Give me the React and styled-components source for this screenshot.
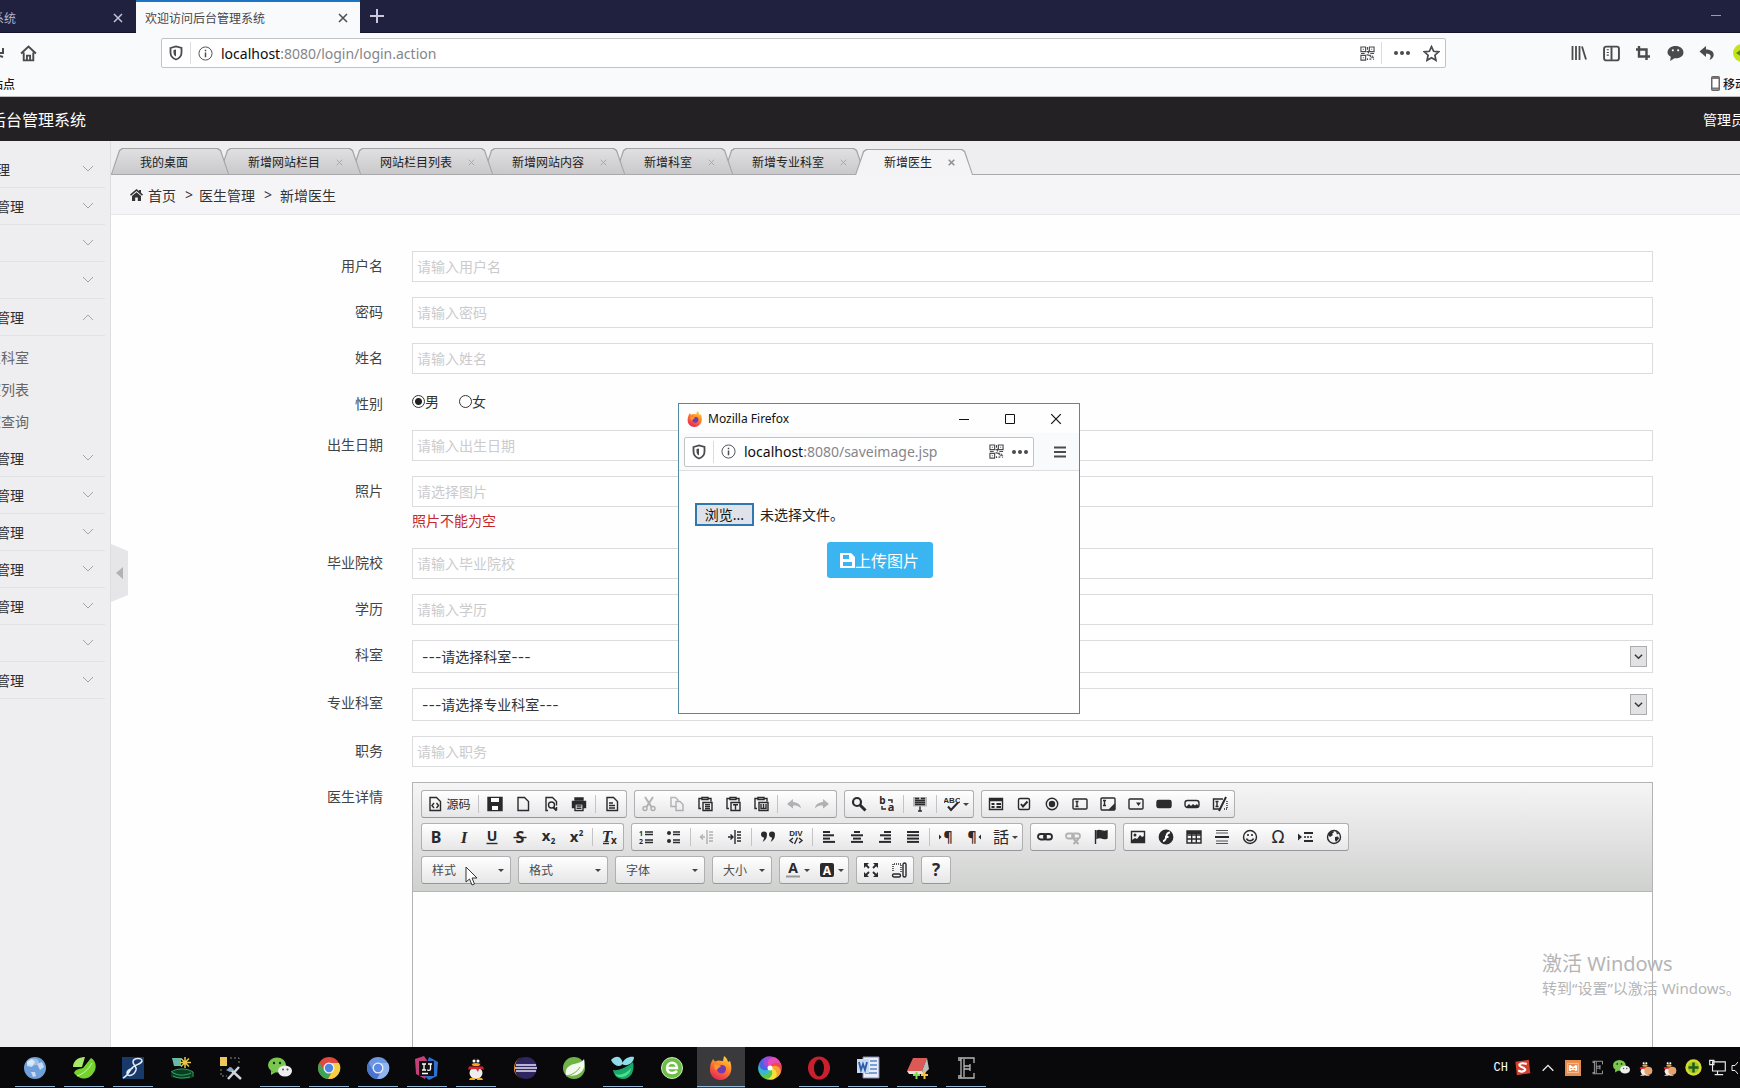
import React, { useRef } from "react";
import styled, { createGlobalStyle, css } from "styled-components";

const Global = createGlobalStyle`
  *, *::before, *::after { box-sizing: border-box; }
  body {
    margin: 0;
    overflow: hidden;
    font-family: "Noto Sans", "Noto Sans CJK SC", sans-serif;
    font-size: 14px;
    color: #333;
    background: #fefefe;
  }
  button, input, select, textarea { font-family: inherit; font-size: inherit; color: inherit; margin: 0; }
  button { border: 0; padding: 0; background: none; cursor: pointer; }
  a { color: inherit; text-decoration: none; }
  svg { display: block; flex: none; }
`;

/* ---------- shell ---------- */
const Screen = styled.div`
  position: relative;
  display: flex;
  flex-direction: column;
  height: 100vh;
  overflow: hidden;
`;
const IconButton = styled.button`
  flex: none;
  width: ${(p) => p.$w || 32}px;
  height: ${(p) => p.$h || 28}px;
  display: flex;
  align-items: center;
  justify-content: center;
  color: ${(p) => p.$color || "#4a4a4f"};
`;
const Spacer = styled.div`
  flex: ${(p) => (p.$w ? `0 0 ${p.$w}px` : 1)};
`;
const ClippedText = styled.span`
  flex: none;
  display: flex;
  justify-content: ${(p) => (p.$start ? "flex-start" : "flex-end")};
  width: ${(p) => p.$w}px;
  overflow: hidden;
  white-space: nowrap;
`;

/* ---------- browser chrome ---------- */
const BrowserTabs = styled.div`
  display: flex;
  flex: none;
  height: 33px;
  background: #20213f;
  border-bottom: 1px solid #14142c;
`;
const BrowserTab = styled.div`
  display: flex;
  align-items: center;
  width: ${(p) => p.$w}px;
  height: 33px;
  font-size: 12px;
  color: ${(p) => (p.$active ? "#45454b" : "#b4b4cc")};
  background: ${(p) => (p.$active ? "#f9fafc" : "transparent")};
  border-top: 2px solid ${(p) => (p.$active ? "#1d74c4" : "transparent")};
  padding-left: ${(p) => (p.$active ? 9 : 0)}px;
`;
const AddressRow = styled.div`
  display: flex;
  align-items: center;
  flex: none;
  height: 40px;
  background: #f9fafc;
`;
const AddressBar = styled.div`
  display: flex;
  align-items: center;
  flex: 1;
  height: 30px;
  min-width: 0;
  background: #fff;
  border: 1px solid #c3c3c6;
  border-radius: 2px;
  color: #55555a;
`;
const PopupAddress = styled(AddressBar)`
  flex: 0 0 350px;
`;
const Url = styled.span`
  flex: 1;
  min-width: 0;
  font-size: 14px;
  color: #85858a;
  white-space: nowrap;
  b { font-weight: 400; color: #0c0c0d; }
`;
const Rule = styled.i`
  flex: none;
  width: 1px;
  height: 22px;
  background: #dcdcde;
`;
const Bookmarks = styled.div`
  display: flex;
  align-items: center;
  flex: none;
  height: 24px;
  padding-bottom: 2px;
  font-size: 12px;
  font-weight: 500;
  color: #1c1c20;
  background: #f9fafc;
  border-bottom: 1px solid #bdbdbf;
`;

/* ---------- admin page ---------- */
const AdminHeader = styled.header`
  display: flex;
  flex: none;
  align-items: center;
  justify-content: space-between;
  height: 44px;
  background: #232123;
  color: #fff;
`;
const SiteTitle = styled.h1`
  display: flex;
  margin: 0;
  font-size: 16px;
  font-weight: 400;
`;
const Body = styled.div`
  display: flex;
  flex: 1;
  min-height: 0;
`;
const Sidebar = styled.nav`
  flex: none;
  position: relative;
  width: 111px;
  padding-top: 10px;
  background: #eeeef0;
  border-right: 1px solid #dededf;
`;
const MenuRow = styled.button`
  display: flex;
  align-items: center;
  justify-content: space-between;
  width: 105px;
  height: 37px;
  padding-right: 11px;
  color: #2e2e30;
  border-bottom: 1px solid #e2e2e4;
`;
const SubMenu = styled.div`
  padding: 6px 0 2px;
  display: flex;
  flex-direction: column;
`;
const SubLink = styled.a`
  display: flex;
  height: 32px;
  line-height: 32px;
  color: #666;
`;
const Collapse = styled.button`
  position: absolute;
  left: 111px;
  top: 403px;
  width: 17px;
  height: 58px;
  display: flex;
  align-items: center;
  justify-content: center;
  background: #e6e6e8;
  clip-path: polygon(0 0, 100% 7px, 100% 51px, 0 100%);
`;
const Main = styled.main`
  flex: 1;
  min-width: 0;
  display: flex;
  flex-direction: column;
  background: #fefefe;
`;
const PageTabs = styled.div`
  display: flex;
  flex: none;
  align-items: flex-end;
  height: 34px;
  background: #eeeef0;
  border-bottom: 1px solid #a9a9ab;
  isolation: isolate;
`;
const slant = "polygon(0 100%, 8px 2px, 11px 0, calc(100% - 11px) 0, calc(100% - 8px) 2px, 100% 100%)";
const PageTab = styled.div`
  position: relative;
  z-index: ${(p) => (p.$active ? 20 : p.$z)};
  display: flex;
  align-items: center;
  flex: none;
  height: 26px;
  padding: ${(p) => (p.$active ? 0 : 2)}px 15px 0 29px;
  margin-right: -10px;
  margin-bottom: ${(p) => (p.$active ? -1 : 0)}px;
  font-size: 12px;
  color: #222;
  &::before, &::after {
    content: "";
    position: absolute;
    z-index: -1;
    inset: 0;
    background: #a3a3a5;
    clip-path: ${slant};
  }
  &::after {
    inset: 1px 1px 0 1px;
    background: ${(p) => (p.$active ? "#f4f4f6" : "linear-gradient(#e0e0e2, #c9c9cb)")};
  }
`;
const TabClose = styled.button`
  width: 14px;
  height: 14px;
  margin-left: 12px;
  display: flex;
  align-items: center;
  justify-content: center;
  color: ${(p) => (p.$active ? "#8f8f91" : "#a8a8aa")};
  visibility: ${(p) => (p.$hidden ? "hidden" : "visible")};
`;
const Breadcrumb = styled.nav`
  display: flex;
  flex: none;
  align-items: center;
  height: 40px;
  padding-left: 19px;
  background: #f5f5f7;
  border-bottom: 1px solid #e8e8ea;
  a { margin-left: 5px; }
  span { width: 12px; margin-left: 9px; }
  span + a { margin-left: 2px; }
  span + a:last-child { margin-left: 4px; }
`;

/* ---------- form ---------- */
const Form = styled.form`
  display: flex;
  flex-direction: column;
  flex: 1;
  min-height: 0;
  gap: 15px;
  padding: 36px 87px 0 0;
`;
const FormRow = styled.div`
  display: flex;
  gap: 29px;
  ${(p) => p.$grow && css`flex: 1; min-height: 0;`}
  ${(p) => p.$h && css`height: ${p.$h}px;`}
`;
const RowLabel = styled.label`
  flex: none;
  width: 272px;
  height: 29px;
  line-height: 29px;
  text-align: right;
  color: #444;
`;
const Field = styled.div`
  position: relative;
  flex: 1;
  min-width: 0;
`;
const box = css`
  display: block;
  width: 100%;
  border: 1px solid #dcdcde;
  border-radius: 0;
  background: #fff;
  outline: none;
`;
const TextInput = styled.input`
  ${box}
  height: 31px;
  padding: 0 4px;
  &::placeholder { color: #cbcbcd; opacity: 1; }
`;
const Select = styled.select`
  ${box}
  height: 33px;
  padding: 0 9px;
  appearance: none;
  font-family: Inter, "Noto Sans CJK SC", sans-serif;
`;
const SelectArrow = styled.span`
  position: absolute;
  right: 6px;
  top: 6px;
  width: 17px;
  height: 21px;
  display: flex;
  align-items: center;
  justify-content: center;
  background: #e2e2e5;
  border: 1px solid #adadb0;
  pointer-events: none;
`;
const ErrorText = styled.p`
  margin: 0;
  height: 26px;
  line-height: 28px;
  color: #c4282b;
`;
const RadioGroup = styled.div`
  display: flex;
  align-items: center;
  gap: 20px;
  height: 24px;
`;
const RadioLabel = styled.label`
  display: flex;
  align-items: center;
`;
const Radio = styled.input`
  appearance: none;
  width: 13px;
  height: 13px;
  border: 1px solid #333;
  border-radius: 50%;
  background: #fff;
  &:checked { background: radial-gradient(circle, #222 3px, #fff 4px); }
`;

/* ---------- rich text editor ---------- */
const Editor = styled.div`
  flex: 1;
  min-width: 0;
  display: flex;
  flex-direction: column;
  border: 1px solid #b3b3b5;
  border-bottom: 0;
`;
const Toolbar = styled.div`
  display: flex;
  flex-direction: column;
  gap: 5px;
  padding: 7px 8px;
  background: linear-gradient(#f5f5f5, #cfd1cf);
  border-bottom: 1px solid #b6b6b6;
`;
const ToolRow = styled.div`
  display: flex;
  gap: 7px;
`;
const ToolGroup = styled.div`
  display: flex;
  align-items: center;
  height: 28px;
  border: 1px solid #b0b0b2;
  border-bottom-color: #979799;
  border-radius: 3px;
  background: linear-gradient(#fff, #e6e6e8);
`;
const Tool = styled.button`
  display: flex;
  align-items: center;
  justify-content: center;
  gap: 3px;
  width: ${(p) => p.$w || 28}px;
  height: 26px;
  font-size: 12px;
  color: #2a2a2c;
  opacity: ${(p) => (p.$off ? 0.32 : 1)};
`;
const ToolSep = styled.i`
  width: 1px;
  height: 18px;
  margin: 0 2px;
  background: #c4c4c6;
`;
const Combo = styled.button`
  display: flex;
  align-items: center;
  justify-content: space-between;
  width: ${(p) => p.$w}px;
  height: 28px;
  padding: 0 6px 0 10px;
  font-size: 12px;
  color: #4c4c4e;
  border: 1px solid #b0b0b2;
  border-bottom-color: #979799;
  border-radius: 3px;
  background: linear-gradient(#fff, #e6e6e8);
`;
const EditArea = styled.textarea`
  flex: 1;
  border: 0;
  padding: 12px;
  resize: none;
  outline: none;
  background: #fefefe;
`;

/* ---------- popup window ---------- */
const Popup = styled.section`
  position: absolute;
  z-index: 30;
  left: 678px;
  top: 403px;
  width: 402px;
  height: 311px;
  display: flex;
  flex-direction: column;
  background: #fefefe;
  border: 1px solid #4f8ba3;
`;
const PopupTitle = styled.div`
  display: flex;
  align-items: center;
  height: 29px;
  padding-left: 8px;
  font-size: 12px;
  color: #111;
  gap: 5px;
`;
const PopupControls = styled.div`
  display: flex;
  flex: none;
`;
const PopupBar = styled.div`
  display: flex;
  align-items: center;
  height: 38px;
  padding: 0 0 0 5px;
  background: #f9fafc;
  border-bottom: 1px solid #dfdfe1;
`;
const PopupBody = styled.div`
  display: flex;
  flex-direction: column;
  padding: 32px 15px 0 16px;
  gap: 16px;
`;
const FileLine = styled.div`
  display: flex;
  align-items: center;
  gap: 6px;
  height: 23px;
  line-height: 20px;
  color: #222;
`;
const Browse = styled.button`
  width: 59px;
  height: 23px;
  line-height: 18px;
  background: #dfe2e8;
  border: 2px solid #2f78b0;
  color: #111;
`;
const Upload = styled.button`
  display: flex;
  align-items: center;
  justify-content: center;
  align-self: center;
  width: 106px;
  height: 36px;
  font-size: 16px;
  color: #fff;
  background: #3bb4f2;
  border-radius: 3px;
`;

/* ---------- desktop overlays and taskbar ---------- */
const Watermark = styled.div`
  position: absolute;
  right: 2px;
  bottom: 89px;
  width: 196px;
  font-size: 15px;
  line-height: 22px;
  color: #b5b5b7;
  white-space: nowrap;
  pointer-events: none;
  strong { display: block; font-weight: 400; font-size: 20px; line-height: 26px; }
`;
const Cursor = styled.svg`
  position: absolute;
  left: 465px;
  top: 866px;
`;
const Taskbar = styled.footer`
  display: flex;
  flex: none;
  height: 41px;
  padding-left: 11px;
  background: #09090b;
  color: #fff;
`;
const TaskItem = styled.button`
  display: flex;
  align-items: center;
  justify-content: center;
  flex: none;
  width: 48px;
  margin-right: 1px;
  border-top: 1px solid transparent;
  background-color: ${(p) => (p.$active ? "#3a393b" : "transparent")};
  background-image: ${(p) => (p.$open ? "linear-gradient(#93b6d2, #93b6d2)" : "none")};
  background-size: ${(p) => (p.$active ? 48 : 40)}px 1px;
  background-position: center bottom 1px;
  background-repeat: no-repeat;
`;
const Tray = styled.div`
  display: flex;
  align-items: center;
  margin-left: auto;
  font: 12px "Liberation Mono", monospace;
`;
const TrayItem = styled.button`
  display: flex;
  align-items: center;
  justify-content: center;
  width: ${(p) => p.$w || 24}px;
  height: 40px;
`;

/* ---------- small icons ---------- */
const Line = ({ s = 16, w = 1.5, vb = 16, children, ...r }) => (
  <svg width={s} height={s} viewBox={`0 0 ${vb} ${vb}`} fill="none" stroke="currentColor" strokeWidth={w} {...r}>{children}</svg>
);
const Cross = ({ s = 10, w = 1.5 }) => <Line s={s} w={w} vb={10}><path d="M1 1l8 8M9 1l-8 8" /></Line>;
const Chevron = ({ up }) => <Line s={12} w={1} vb={12} stroke="#a4a4a6"><path d={up ? "M1 9l5-5 5 5" : "M1 3l5 5 5-5"} /></Line>;
const Caret = () => <svg width="6" height="3" viewBox="0 0 6 3"><path d="M0 0h6L3 3z" fill="#444" /></svg>;
const Shield = () => <Line w={1.8}><path d="M2.500 3L8 1.500 13.500 3v4.500c0 4-2.500 6-5.500 7-3-1-5.500-3-5.500-7z" /><path d="M8 4.500v7C6 10.500 5.500 9 5.500 7.500V5z" fill="currentColor" stroke="none" /></Line>;
const Info = () => <Line w={1} s={15}><circle cx="8" cy="8" r="7" /><path d="M8 7v5M8 4v1.600" strokeWidth="1.600" /></Line>;
const Dots = () => <svg width="18" height="6" viewBox="0 0 18 6" fill="currentColor"><circle cx="3" cy="3" r="2" /><circle cx="9" cy="3" r="2" /><circle cx="15" cy="3" r="2" /></svg>;
const Qr = () => <Line s={15} w={1.2}><path d="M1 1h5v5H1zM10 1h5v5h-5zM1 10h5v5H1zM3 3.500h1M12 3.500h1M3 12.500h1M8 1v3M7 6h2v2M1 8h4M11 8h4M9 10h2v2M13 10v2h2M8 13v2M10 14h2M14 14h1M7 9.500h2M12 12.500h1M9 5h1" /></Line>;
const Star = () => <Line s={17} w={1.6}><path d="M8 1.500l2 4.400 4.700.5-3.500 3.200 1 4.800L8 12l-4.200 2.400 1-4.800L1.300 6.400 6 5.900z" /></Line>;
const House = () => <Line s={17} w={1.8}><path d="M1 8l7-6.500L15 8M3.500 7v7.500h9V7" /><path d="M6.500 14.500V10h3v4.500" /></Line>;
const Fox = ({ s = 24 }) => (
  <svg width={s} height={s} viewBox="0 0 24 24">
    <defs><linearGradient id={`fx${s}`} x1=".8" y1="0" x2=".3" y2="1"><stop offset="0" stopColor="#ffd93b" /><stop offset=".5" stopColor="#ff7a28" /><stop offset="1" stopColor="#e6245c" /></linearGradient></defs>
    <path d="M2 7l2-4 2 2.500 3-1L14 5l1-5c3 2 3.500 4 4 6l2-1c3 8 1 15-5 18-7 3-14-1-15-8 0-3 0-5 1-8z" fill={`url(#fx${s})`} />
    <path d="M8 10l5-1c4 0 5 4 3 7-3 3-8 1-8-3z" fill="#6f3bb5" /><path d="M5 9c3-1 4 0 7 1-1 2-3 1-3 3l-3 1z" fill="#ff9a2e" />
  </svg>
);

const T = ({ children, x = 8, y = 13, size = 14, f = "Noto Sans", ...r }) => (
  <text x={x} y={y} fontSize={size} fontFamily={f} fontWeight="700" textAnchor="middle" fill="currentColor" stroke="none" {...r}>{children}</text>
);
const page = "M3 1.500h6.500l4 4v9H3z";
const bars = (rows) => <g strokeWidth="2">{rows.map(([a, b], i) => <path key={i} d={`M${a} ${3 + i * 3.3}H${b}`} />)}</g>;
const clip = <path d="M5 2.500H2v10h2M11 2.500h3v3M5 1.500h6v2H5zM6 6.500h9v8H6z" />;
const I = {
  source: <><path d={page} /><path d="M7 7l-2 2.500L7 12M9.500 7l2 2.500-2 2.500" /></>,
  save: <><path d="M1 1.500h14v13H1z" fill="currentColor" /><path d="M4 2h8v4H4zM5 10h6v4H5z" fill="#fff" stroke="none" /></>,
  blank: <path d={page} />,
  preview: <><path d="M5 14.500H3v-13h6.500l4 4v4M13.500 11v3.500" /><circle cx="8.500" cy="9" r="3" /><path d="M10.500 11.500l3 3" strokeWidth="2" /></>,
  print: <><path d="M4 2h8v2H4z" fill="currentColor" /><path d="M1.500 5.500h13v6h-13z" fill="currentColor" /><path d="M4 8h8v6.500H4z" fill="#fff" /><path d="M5.500 10h5M5.500 12.300h5" /></>,
  template: <><path d={page} /><path d="M5 7h4M5 9.500h6M5 12h6" /></>,
  cut: <><path d="M4 1l6.500 10M12 1L5.500 11" strokeWidth="2" /><circle cx="4" cy="12.500" r="2" /><circle cx="12" cy="12.500" r="2" /></>,
  copy: <><path d="M9 10.500H2v-9h4.500L9 4v2" /><path d="M7 5.500h4l3 3v6H7z" fill="#f4f4f4" /></>,
  paste: <>{clip}<path d="M8 8.700h5M8 10.700h5M8 12.700h5" /></>,
  pasteT: <>{clip}<path d="M8 8.700h5M10.500 8.700v5" /></>,
  pasteW: <>{clip}<path d="M8 8v4.500h5V8M10.500 8v4" /></>,
  undo: <path d="M7 3L1 8l6 4.500V9.500c4 0 6 .5 8 3-.5-4-3-6-8-6.500z" fill="currentColor" stroke="none" />,
  redo: <path d="M9 3l6 5-6 4.500V9.500c-4 0-6 .5-8 3 .5-4 3-6 8-6.500z" fill="currentColor" stroke="none" />,
  find: <><circle cx="6" cy="6" r="4" strokeWidth="2.200" /><path d="M9 9l5.500 5.500" strokeWidth="3" /></>,
  replace: <><T x={3.5} y={8} size={10}>b</T><T x={12} y={15} size={11}>a</T><path d="M9 4h4v3M3 10v3h4" /></>,
  all: <><path d="M1 1h14v9.500H1z" fill="#b8b8ba" stroke="none" /><path d="M3 2.500h4M9 2.500h4M3 4.500h10M3 6.500h10M3 8.500h10M8 10.500V15M6 15h4" /></>,
  spell: <><T size={8} y={7} f="Liberation Sans">ABC</T><path d="M4 10.500l3 3.500 7-7.500" strokeWidth="2" /></>,
  form: <><path d="M1.500 2.500h13v11h-13z" /><path d="M1.500 4h13" strokeWidth="2.500" /><path d="M3.500 8h3M8.500 8H13M3.500 11h3M8.500 11H13" strokeWidth="1.800" /></>,
  check: <><rect x="2.500" y="2.500" width="11" height="11" rx="1.500" /><path d="M5 8l2 2.500 4.500-5" strokeWidth="2" /></>,
  radio: <><circle cx="8" cy="8" r="5.700" /><circle cx="8" cy="8" r="3.200" fill="currentColor" stroke="none" /></>,
  field: <><rect x="1" y="3" width="14" height="10" rx="1" /><path d="M3.500 5.500h3M5 5.500v5M3.500 10.500h3" /></>,
  area: <><rect x="1" y="2" width="14" height="12" rx="1" /><path d="M3 4.500h3M4.500 4.500v5M3 9.500h3M9 14l6-6M11 14l4-4M13 14l2-2" /></>,
  list: <><rect x="1" y="3" width="14" height="10" rx="1" /><path d="M8 6.500h5L10.500 10z" fill="currentColor" stroke="none" /></>,
  button: <rect x="1" y="4.500" width="14" height="7" rx="1.500" fill="currentColor" />,
  imgbtn: <><rect x="1" y="4.500" width="14" height="7" rx="2.500" /><path d="M2 11l3-3 2 2 2-2 2 1.500L13 8l2 3z" fill="currentColor" stroke="none" /></>,
  hidden: <><path d="M8 13H1.500V3H11M3.500 5.500h3M5 5.500v5M3.500 10.500h3" /><path d="M14 1L7 15" strokeWidth="2" /><path d="M12 13h3V4" strokeDasharray="1 1" /></>,
  bold: <T size={16} y={14}>B</T>,
  italic: <T size={17} y={14} f="Liberation Serif" fontStyle="italic">I</T>,
  under: <><T size={14} y={12}>U</T><path d="M2.500 14.500h11" /></>,
  strike: <><T size={16} y={14}>S</T><path d="M1.500 8.500h13" /></>,
  sub: <><T size={15} x={6} y={12}>x</T><T size={8} x={13} y={15}>2</T></>,
  sup: <><T size={15} x={6} y={13}>x</T><T size={8} x={13} y={7}>2</T></>,
  clear: <><T size={17} x={6} f="Liberation Serif" fontStyle="italic">T</T><path d="M2 14.500h6" /><T size={10} x={13} y={15}>x</T></>,
  ol: <><path d="M7 3h8M7 5.500h8M7 11h8M7 13.500h8" /><T size={7} x={3} y={7}>1</T><T size={7} x={3} y={15}>2</T></>,
  ul: <><path d="M7 3h7M7 5.500h7M7 11h7M7 13.500h7" /><circle cx="3" cy="4" r="2" fill="currentColor" stroke="none" /><circle cx="3" cy="12" r="2" fill="currentColor" stroke="none" /></>,
  outdent: <path d="M8 1v14M10 3h4M10 6h4M10 9h4M10 12h4M1 8h5M4 5.500L1.500 8 4 10.500" />,
  indent: <path d="M8 1v14M10 3h4M10 6h4M10 9h4M10 12h4M1 8h5M3.500 5.500L6 8l-2.500 2.500" />,
  quote: <g fill="currentColor" stroke="none"><path d="M1 5.500a3 3 0 116 0c0 4-2 6-4.500 7.500 1-2 1.500-3 1.500-4.500-2 0-3-1.500-3-3z" /><path d="M9 5.500a3 3 0 116 0c0 4-2 6-4.500 7.500 1-2 1.500-3 1.500-4.500-2 0-3-1.500-3-3z" /></g>,
  div: <><T size={8} y={7} f="Liberation Sans">DIV</T><path d="M5 9l-3 2.500L5 14M11 9l3 2.500-3 2.500M9.500 8.500l-3 6.500" /></>,
  left: bars([[2, 9], [2, 13], [2, 9], [2, 14]]),
  center: bars([[5, 11], [2, 14], [4, 12], [2, 14]]),
  right: bars([[7, 14], [3, 14], [7, 14], [2, 14]]),
  full: bars([[2, 14], [2, 14], [2, 14], [2, 14]]),
  ltr: <><path d="M1 5.500v5L3.500 8z" fill="currentColor" stroke="none" /><T x={10} size={14}>¶</T></>,
  rtl: <><path d="M15 5.500v5L12.500 8z" fill="currentColor" stroke="none" /><T x={6} size={14}>¶</T></>,
  lang: <T size={16} y={14} f="Noto Sans CJK JP" fontWeight="400">話</T>,
  link: <><rect x="1" y="5" width="8" height="5.500" rx="2.700" strokeWidth="1.800" /><rect x="7" y="5" width="8" height="5.500" rx="2.700" strokeWidth="1.800" /></>,
  unlink: <><rect x="1" y="4.500" width="8" height="5" rx="2.500" strokeWidth="1.800" /><rect x="7" y="4.500" width="8" height="5" rx="2.500" strokeWidth="1.800" /><path d="M8.500 10l5 5M13.500 10l-5 5" strokeWidth="1.800" /></>,
  anchor: <><path d="M2.500 1v14" /><path d="M4 2c4-2 5 2 10 0v7c-5 2-6-2-10 0z" fill="currentColor" /></>,
  image: <><path d="M1.500 2.500h13v11h-13z" /><circle cx="5" cy="6" r="1.500" fill="currentColor" stroke="none" /><path d="M2 13V11l3-2 2 1 3-4 2 2 2-1v6z" fill="currentColor" stroke="none" /></>,
  flash: <><circle cx="8" cy="8" r="6.700" fill="currentColor" /><path d="M12 3.500c-4 0-3.500 4-4 5.500s-1 3-3 3M7 8h3.500" stroke="#fff" strokeWidth="1.800" /></>,
  table: <><path d="M1 2h14v12H1zM1 6h14M1 10h14M5.700 5v9M10.300 5v9" /><path d="M1 3.500h14" strokeWidth="3" /></>,
  hr: <><path d="M2 1.500h12M2 4h12M2 12h12M2 14.500h12" strokeWidth=".8" /><path d="M1 8h14" strokeWidth="2" /></>,
  smile: <><circle cx="8" cy="8" r="6.500" /><path d="M4.500 9.500c1 3 6 3 7 0" /><path d="M6 5v2M10 5v2" strokeWidth="1.600" /></>,
  omega: <T size={17} f="DejaVu Sans" y={14} fontWeight="400">Ω</T>,
  brk: <><path d="M0 4.500v7L4 8z" fill="currentColor" stroke="none" /><path d="M6 4h9M6 12h9" strokeWidth="2" /><path d="M6 8h9" strokeDasharray="2 1" /></>,
  globe: <><circle cx="8" cy="8" r="6.500" /><path d="M3 4l4-2 1 1-2 2 1 1-3 2-2-2zM9 8l3-.500 1 2-3 3.500-1-2zM10 2.500l3 2-2 1z" fill="currentColor" stroke="none" /></>,
  color: <><T size={14} y={11}>A</T><path d="M1 14.500h14" strokeWidth="2" stroke="#999" /></>,
  bg: <><rect x="1" y="1" width="14" height="14" rx="2" fill="currentColor" stroke="none" /><T size={12} y={12.5} style={{ fill: "#fff" }}>A</T></>,
  max: <><path d="M2 2l4 4M14 2l-4 4M2 14l4-4M14 14l-4-4" strokeWidth="1.800" /><path d="M1 6V1h5zM10 1h5v5zM1 10v5h5zM15 10v5h-5z" fill="currentColor" stroke="none" /></>,
  blocks: <><path d="M2 9V2h8v8" strokeDasharray="1 1" /><rect x="12" y="1" width="3" height="14" rx="1.500" /><rect x="1.500" y="12" width="8" height="3" rx="1.500" /></>,
  help: <T size={17} y={14}>?</T>,
};
const names = {
  save: "保存", blank: "新建", preview: "预览", print: "打印", template: "模板", cut: "剪切", copy: "复制", paste: "粘贴",
};
const widths = { source: 54, spell: 34, lang: 34, color: 34, bg: 34 };
const Group = ({ items }) => (
  <ToolGroup>
    {items.map((it, i) => {
      if (it === "|") return <ToolSep key={i} />;
      const off = it[0] === "-";
      const more = it[0] === "+";
      const id = off || more ? it.slice(1) : it;
      return (
        <Tool key={i} type="button" $w={widths[id]} $off={off} aria-label={names[id] || id}>
          <Line w={1.4}>{I[id]}</Line>
          {id === "source" && "源码"}
          {more && <Caret />}
        </Tool>
      );
    })}
  </ToolGroup>
);

/* ---------- taskbar artwork ---------- */
const Wechat = <><ellipse cx="9" cy="9" rx="9" ry="7.500" fill="#7ac74f" /><path d="M3 15l0 4 5-3z" fill="#7ac74f" /><circle cx="6" cy="7" r="1.200" fill="#17300c" /><circle cx="12" cy="7" r="1.200" fill="#17300c" /><ellipse cx="17" cy="15" rx="7" ry="5.500" fill="#eee" /><circle cx="15" cy="13.500" r="1" fill="#555" /><circle cx="19.500" cy="13.500" r="1" fill="#555" /></>;
const Penguin = <><ellipse cx="12" cy="17" rx="6.500" ry="6" fill="#eee" /><path d="M7 8a5 6 0 0110 0v2H7z" fill="#18181c" /><circle cx="10" cy="5" r="1.500" fill="#fff" /><circle cx="14" cy="5" r="1.500" fill="#fff" /><ellipse cx="12" cy="8.500" rx="4" ry="1.600" fill="#f6a623" /><path d="M5 10.500h14l1 3-5-.5-1 3-2-3-8 .5z" fill="#d8262c" /><path d="M6 22h5v2H5zM13 22h5l1 2h-6z" fill="#f6a623" /></>;
const Epic = <path d="M4 2h16v5M4 22h16v-5M7 2v20M10 3v18M10 10h6M10 13h6M16 8v7M4 4h3M4 20h3" fill="none" stroke="#b8b8ba" strokeWidth="1.300" />;
const chrome = (a, b, c, d) => (
  <>
    <circle cx="12" cy="12" r="11" fill={a} />
    <path d="M2.500 6.500A11 11 0 0011 23l4.500-8L12 12 6 13z" fill={b} />
    <path d="M12 7h10a11 11 0 01-11 16l5-9z" fill={c} />
    <circle cx="12" cy="12" r="5.500" fill="#eef" /><circle cx="12" cy="12" r="4.200" fill={d} />
  </>
);
const tasks = [
  ["浏览器", 1, <><circle cx="12" cy="12" r="11" fill="#6f9fd8" /><path d="M4 6l5-3 3 3-3 5-5-1zM14 8l5-2 2 5-4 3zM8 16l4 0 1 4-3 1z" fill="#c6dcf4" /><ellipse cx="10" cy="6" rx="6" ry="3.500" fill="#fff" opacity=".35" /></>],
  ["绿叶", 1, <><path d="M11 12L19 2c5 3 6 9 3 14-5 9-15 8-20 1 1-3 4-4 9-5z" fill="#74d32e" /><path d="M1 11C1 5 6 1 13 1l-3 10z" fill="#a6e86a" /><path d="M5 20c6-2 11-6 15-13" stroke="#d3f7a8" fill="none" /></>],
  ["SQL", 1, <><path d="M1 1h22v22H1z" fill="#173a6b" /><path d="M2 22C5 21 7 18 10 13c3-5 10-4 11-8 0-4-9-3-9 1 0 3 4 4 3 8-2 6-9 7-9 3 0-3 3-4 6-5" stroke="#e8eef8" strokeWidth="1.500" fill="none" /></>],
  ["Navicat", 0, <><path d="M2 2h9v8H4z" fill="#68b9a8" /><path d="M15 1v11M10 6.500h11M11 2.500l8 8M19 2.500l-8 8" stroke="#e8c84b" strokeWidth="1.500" /><path d="M1 17c4-4 17-4 22-1l-1 6c-6 1-14 1-21-1z" fill="#073f20" /><path d="M2 16c5 4 13 4 19 1M3 20c6 3 11 2 17 1M1 16c6-4 16-4 22 0v5" stroke="#38a868" fill="none" /></>],
  ["工具", 0, <><path d="M1 1h7v9H1z" fill="#edc75c" /><path d="M11 2h9v7M2 13v7h6" stroke="#888" strokeDasharray="2 2" fill="none" /><path d="M9 23L20 11M10 12l12 11" stroke="#d0d4dc" strokeWidth="2.500" /><path d="M7 14l5-3 3 3-4 2z" fill="#8ba4c0" /></>],
  ["微信", 1, Wechat],
  ["Chrome", 1, chrome("#e0493c", "#3aa655", "#f8cf3e", "#4c86e0")],
  ["Chromium", 1, chrome("#6d97e0", "#4a74cc", "#8fb4ee", "#5a8ae2")],
  ["IDEA", 1, <><path d="M0 3l9-3 6 9-5 14-9-5z" fill="#c3417b" /><path d="M14 1l9 5-1 14-8 4-6-5z" fill="#2f6fd0" /><path d="M4 5h15v15H4z" fill="#111" /><path d="M7 8h4M9 8v6M7 14h4M13 8h4M15.500 8v5c0 2-3 1.500-3 .5M7 17.500h6" stroke="#fff" strokeWidth="1.300" fill="none" /></>],
  ["QQ", 1, Penguin],
  ["Eclipse", 0, <><circle cx="13" cy="12" r="11" fill="#2f2560" /><path d="M9 1a11.500 11.500 0 000 22A12 12 0 019 1z" fill="#f09a3a" /><path d="M3 9h20M2 12h22M3 15h20" stroke="#e6e4f4" strokeWidth="1.500" /></>],
  ["Spring", 0, <><circle cx="12" cy="12" r="11" fill="#6fb245" /><path d="M22 3c3 12-6 19-18 16-2-9 7-11 12-12 3-1 5-2 6-4z" fill="#f2f8ec" /><path d="M4 20c6-1 11-4 14-9" stroke="#6fb245" fill="none" /></>],
  ["地球", 1, <><path d="M2 14c6 1 14-3 20-8 2 9-2 17-10 17-6 0-9-4-10-9z" fill="#19a86a" /><path d="M0 4c4-4 8-4 10-1 3 4 1 7-2 7S2 8 0 4zM11 8c2-6 8-8 12-7 0 5-5 9-10 8z" fill="#8fdde8" /><path d="M4 18c5 2 11 0 16-6-1 9-12 12-16 6z" fill="#4de08c" /></>],
  ["360", 0, <><circle cx="12" cy="12" r="10.500" fill="#6dbe45" stroke="#cfeebb" /><path d="M7 12h10c0-7-10-7-10 0 0 6 7 6 10 3" stroke="#fff" strokeWidth="2.500" fill="none" /></>],
  ["Firefox", 2, null],
  ["彩轮", 0, <>{["#f1474b", "#f7a331", "#f3e13b", "#59c84b", "#36b7d8", "#4a63e0", "#a04be0", "#e84bb4"].map((c, i) => <path key={c} d="M12 12C6 9 8 0 15 .5A11.500 11.500 0 0122 6c-4-2-9-1-10 6z" fill={c} transform={`rotate(${i * 45 + 60} 12 12)`} />)}<circle cx="12" cy="12" r="2.500" fill="#fff" /></>],
  ["Opera", 1, <><ellipse cx="12" cy="12" rx="11" ry="11.500" fill="#c9202e" /><ellipse cx="12" cy="12" rx="5" ry="8.500" fill="#09090b" /></>],
  ["Word", 1, <><path d="M7 1h16v21H7z" fill="#e8eef8" stroke="#88a" /><path d="M14 5h7M14 9h7M14 13h7M9 17h12" stroke="#5a86c8" strokeWidth="1.500" /><path d="M1 3h12v14H1z" fill="#c9d9f0" /><path d="M3 6l2 8 2-6 2 6 2-8" stroke="#2c5cab" strokeWidth="1.800" fill="none" /></>],
  ["SQLyog", 1, <><path d="M8 2h14l-5 13H2z" fill="#dc5a55" /><path d="M22 2l2 11-5 5-2-3z" fill="#bbb" /><path d="M2 15h15l2 3H4z" fill="#efe0dc" /><path d="M8 19h7M11.500 16v7" stroke="#7ed957" strokeWidth="2" /><path d="M16 19h7M19.500 16v7" stroke="#f6c443" strokeWidth="2" /></>],
  ["Epic", 1, Epic],
];
const PenguinFace = <>{Penguin}<circle cx="17" cy="16" r="6" fill="#e7a36f" /></>;
const tray = [
  ["输入法", 26, <><path d="M2 4L21 1l2 19-19 3z" fill="#d43f2e" /><path d="M18 7C8 4 5 9 10 11s8 4 4 6-6 0-8-1" stroke="#fff" strokeWidth="3" fill="none" /></>, 17],
  ["更多", 26, <path d="M4 16l8-8 8 8" stroke="#eee" strokeWidth="2" fill="none" />, 16],
  ["XAMPP", 24, <><path d="M0 0h24v24H0z" fill="#e88a4c" /><path d="M4 5h16v14H4z" fill="none" stroke="#fbe3cf" /><path d="M7 8l10 8M17 8L7 16M7 8v8M17 8v8" stroke="#fff" strokeWidth="2.500" fill="none" /></>, 16],
  ["Epic", 24, Epic, 15],
  ["微信", 24, Wechat, 17],
  ["QQ", 24, PenguinFace, 16],
  ["QQ2", 24, PenguinFace, 16],
  ["安全", 24, <><circle cx="12" cy="12" r="11.500" fill="#d3dc2c" /><circle cx="12" cy="12" r="8" fill="#a4c626" /><path d="M12 5v14M5 12h14" stroke="#1f5c1a" strokeWidth="3.500" /></>, 17],
  ["网络", 24, <path d="M5 4h18v13H5zM12 17v5M8 22h12M1 2h6v6H1z" stroke="#eee" strokeWidth="1.600" fill="#09090b" />, 17],
];

const rows = [
  ["user", "用户名", "请输入用户名"],
  ["pwd", "密码", "请输入密码"],
  ["name", "姓名", "请输入姓名"],
  ["sex", "性别"],
  ["birth", "出生日期", "请输入出生日期"],
  ["photo", "照片", "请选择图片", "照片不能为空"],
  ["school", "毕业院校", "请输入毕业院校"],
  ["edu", "学历", "请输入学历"],
  ["dept", "科室", null, null, "---请选择科室---"],
  ["major", "专业科室", null, null, "---请选择专业科室---"],
  ["post", "职务", "请输入职务"],
];
const pageTabs = ["我的桌面", "新增网站栏目", "网站栏目列表", "新增网站内容", "新增科室", "新增专业科室", "新增医生"];
const menuTop = [["理", 10], ["管理", 24], ["", 24], ["", 24], ["管理", 24, true]];
const menuLow = ["管理", "管理", "管理", "管理", "管理", "", "管理"];

const FieldFor = ({ id, hint, error, option }) => {
  if (id === "sex") {
    return (
      <RadioGroup>
        <RadioLabel><Radio type="radio" name="sex" id="sex" defaultChecked />男</RadioLabel>
        <RadioLabel><Radio type="radio" name="sex" />女</RadioLabel>
      </RadioGroup>
    );
  }
  if (option) {
    return (
      <>
        <Select id={id}><option>{option}</option></Select>
        <SelectArrow><Line s={9} w={1.5} vb={10}><path d="M1 3l4 4 4-4" /></Line></SelectArrow>
      </>
    );
  }
  return (
    <>
      <TextInput id={id} type={id === "pwd" ? "password" : "text"} placeholder={hint} />
      {error && <ErrorText>{error}</ErrorText>}
    </>
  );
};

export default function App() {
  const file = useRef(null);
  return (
    <Screen>
      <Global />
      <BrowserTabs>
        <BrowserTab $w={136}>
          <ClippedText $w={16}>系统</ClippedText>
          <Spacer />
          <IconButton $w={36} $color="#c4c4d8" aria-label="关闭标签"><Cross /></IconButton>
        </BrowserTab>
        <BrowserTab $w={224} $active>
          欢迎访问后台管理系统
          <Spacer />
          <IconButton $w={34} aria-label="关闭标签"><Cross /></IconButton>
        </BrowserTab>
        <IconButton $w={34} $h={32} $color="#c8c8da" aria-label="新标签"><Line s={14} vb={14} w={2}><path d="M7 0v14M0 7h14" /></Line></IconButton>
        <Spacer />
        <IconButton $w={48} $h={32} $color="#9a9ab4" aria-label="最小化"><Line s={10} vb={10} w={1}><path d="M0 4.500h10" /></Line></IconButton>
      </BrowserTabs>
      <AddressRow>
        <IconButton $w={12} aria-label="刷新"><Line s={12} vb={12}><path d="M0 9l3 1M3 1v5H0" strokeWidth="2" /></Line></IconButton>
        <IconButton $w={32} aria-label="主页"><House /></IconButton>
        <Spacer $w={117} />
        <AddressBar>
          <IconButton $w={28} aria-label="跟踪保护"><Shield /></IconButton>
          <Rule />
          <IconButton $w={29} aria-label="站点信息"><Info /></IconButton>
          <Spacer $w={1} />
          <Url><b>localhost</b>:8080/login/login.action</Url>
          <IconButton $w={28} aria-label="二维码"><Qr /></IconButton>
          <Rule />
          <IconButton $w={40} aria-label="更多"><Dots /></IconButton>
          <IconButton $w={18} aria-label="收藏"><Star /></IconButton>
          <Spacer $w={5} />
        </AddressBar>
        <Spacer $w={117} />
        <IconButton aria-label="书库"><Line s={16} w={1.8}><path d="M1.500 1v14M5 1v14M8.500 1v14M11 1.500l4 13" /></Line></IconButton>
        <IconButton aria-label="侧栏"><Line s={17} w={1.8}><rect x="1" y="1.500" width="14" height="13" rx="2" /><path d="M8 2v12" /><path d="M3.500 4.500h2M3.500 7h2M3.500 9.500h2" strokeWidth="1" /></Line></IconButton>
        <IconButton aria-label="截图"><Line s={16} w={2.4}><path d="M4 1v10.500h11M1 4.500h10.500V15" /></Line></IconButton>
        <IconButton aria-label="聊天"><svg width="17" height="17" viewBox="0 0 16 16"><path d="M8 1c4 0 7.500 2.500 7.500 6S12 12.500 8 12.500H7L3 15l.5-4C1.500 10 .5 8.500.5 7 .5 3.500 4 1 8 1z" fill="currentColor" /><circle cx="5.500" cy="5" r="1" fill="#f9fafc" /><circle cx="10.500" cy="5" r="1" fill="#f9fafc" /></svg></IconButton>
        <IconButton aria-label="撤销"><svg width="16" height="16" viewBox="0 0 16 16"><path d="M7 1L.5 6.500 7 12V8.500c4 0 6 1.500 3.500 6.500C17 12 16 4.500 7 4.500z" fill="currentColor" /></svg></IconButton>
        <Spacer $w={10} />
        <ClippedText $w={7} $start><svg width="18" height="18" viewBox="0 0 18 18"><circle cx="9" cy="9" r="9" fill="#c5e21f" /><path d="M3 9l7-5v10z" fill="#5b8a12" /></svg></ClippedText>
      </AddressRow>
      <Bookmarks>
        <ClippedText $w={15}>站点</ClippedText>
        <Spacer />
        <svg width="9" height="15" viewBox="0 0 9 15"><rect x=".75" y=".75" width="7.500" height="13.500" rx="1" fill="#fff" stroke="#666" strokeWidth="1.500" /><path d="M1 2h7M1 12.500h7" stroke="#777" strokeWidth="2" /></svg>
        <Spacer $w={3} />
        <ClippedText $w={17} $start>移动</ClippedText>
      </Bookmarks>

      <AdminHeader>
        <SiteTitle><ClippedText $w={86}>后台管理系统</ClippedText></SiteTitle>
        <ClippedText $w={37} $start>管理员</ClippedText>
      </AdminHeader>

      <Body>
        <Sidebar>
          {menuTop.map(([t, w, up], i) => (
            <MenuRow key={i} aria-label="菜单"><ClippedText $w={w}>{t}</ClippedText><Chevron up={up} /></MenuRow>
          ))}
          <SubMenu>
            {["业科室", "室列表", "室查询"].map((t) => <SubLink key={t} href="#"><ClippedText $w={29}>{t}</ClippedText></SubLink>)}
          </SubMenu>
          {menuLow.map((t, i) => (
            <MenuRow key={i} aria-label="菜单"><ClippedText $w={24}>{t}</ClippedText><Chevron /></MenuRow>
          ))}
          <Collapse aria-label="收起侧栏"><svg width="7" height="12" viewBox="0 0 7 12"><path d="M7 0v12L0 6z" fill="#b2b2b4" /></svg></Collapse>
        </Sidebar>

        <Main>
          <PageTabs>
            {pageTabs.map((t, i) => {
              const active = i === pageTabs.length - 1;
              return (
                <PageTab key={t} $active={active} $z={10 - i}>
                  {t}
                  <TabClose $active={active} $hidden={i === 0} aria-label="关闭"><Cross s={7} w={active ? 2.2 : 1.4} /></TabClose>
                </PageTab>
              );
            })}
          </PageTabs>
          <Breadcrumb>
            <svg width="13" height="12" viewBox="0 0 13 12"><path d="M6.500 0L0 5.500l1 1.200L6.500 2 12 6.700l1-1.200-2-1.700V1H9v1z" fill="#333" /><path d="M2 7l4.500-3.800L11 7v5H7.800V8.500H5.200V12H2z" fill="#333" /></svg>
            <a href="#">首页</a><span>&gt;</span><a href="#">医生管理</a><span>&gt;</span><a href="#">新增医生</a>
          </Breadcrumb>
          <Form onSubmit={(e) => e.preventDefault()}>
            {rows.map(([id, label, hint, error, option]) => (
              <FormRow key={id} $h={id === "sex" ? 26 : 0}>
                <RowLabel htmlFor={id}>{label}</RowLabel>
                <Field><FieldFor id={id} hint={hint} error={error} option={option} /></Field>
              </FormRow>
            ))}
            <FormRow $grow>
              <RowLabel htmlFor="detail">医生详情</RowLabel>
              <Editor>
                <Toolbar>
                  <ToolRow>
                    <Group items={["source", "|", "save", "blank", "preview", "print", "|", "template"]} />
                    <Group items={["-cut", "-copy", "paste", "pasteT", "pasteW", "|", "-undo", "-redo"]} />
                    <Group items={["find", "replace", "|", "all", "|", "+spell"]} />
                    <Group items={["form", "check", "radio", "field", "area", "list", "button", "imgbtn", "hidden"]} />
                  </ToolRow>
                  <ToolRow>
                    <Group items={["bold", "italic", "under", "strike", "sub", "sup", "|", "clear"]} />
                    <Group items={["ol", "ul", "|", "-outdent", "indent", "|", "quote", "div", "|", "left", "center", "right", "full", "|", "ltr", "rtl", "+lang"]} />
                    <Group items={["link", "-unlink", "anchor"]} />
                    <Group items={["image", "flash", "table", "hr", "smile", "omega", "brk", "globe"]} />
                  </ToolRow>
                  <ToolRow>
                    <Combo type="button" $w={90}>样式<Caret /></Combo>
                    <Combo type="button" $w={90}>格式<Caret /></Combo>
                    <Combo type="button" $w={90}>字体<Caret /></Combo>
                    <Combo type="button" $w={60}>大小<Caret /></Combo>
                    <Group items={["+color", "+bg"]} />
                    <Group items={["max", "blocks"]} />
                    <Group items={["help"]} />
                  </ToolRow>
                </Toolbar>
                <EditArea id="detail" />
              </Editor>
            </FormRow>
          </Form>
        </Main>
      </Body>

      <Taskbar>
        {tasks.map(([name, open, art]) => (
          <TaskItem key={name} aria-label={name} $open={open > 0} $active={open === 2}>
            {art ? <svg width="24" height="24" viewBox="0 0 24 24">{art}</svg> : <Fox />}
          </TaskItem>
        ))}
        <Tray>
          <span>CH</span>
          <Spacer $w={1} />
          {tray.map(([name, w, art, s]) => (
            <TrayItem key={name} aria-label={name} $w={w}><svg width={s} height={s} viewBox="0 0 24 24">{art}</svg></TrayItem>
          ))}
          <TrayItem aria-label="音量" $w={11}><svg width="7" height="14" viewBox="0 0 7 14"><path d="M7 1L4 4.500H1v5h3L7 13" fill="none" stroke="#eee" /></svg></TrayItem>
        </Tray>
      </Taskbar>

      <Popup>
        <PopupTitle>
          <Fox s={16} />Mozilla Firefox
          <Spacer />
          <PopupControls>
            <IconButton $w={46} $color="#111" aria-label="最小化"><Line s={10} vb={10} w={1}><path d="M0 5.500h10" /></Line></IconButton>
            <IconButton $w={46} $color="#111" aria-label="最大化"><Line s={10} vb={10} w={1}><path d="M.5.500h9v9h-9z" /></Line></IconButton>
            <IconButton $w={46} $color="#111" aria-label="关闭"><Cross s={12} w={1} /></IconButton>
          </PopupControls>
        </PopupTitle>
        <PopupBar>
          <PopupAddress>
            <IconButton $w={28} aria-label="跟踪保护"><Shield /></IconButton>
            <Rule />
            <IconButton $w={29} aria-label="站点信息"><Info /></IconButton>
            <Spacer $w={1} />
            <Url><b>localhost</b>:8080/saveimage.jsp</Url>
            <IconButton $w={20} aria-label="二维码"><Qr /></IconButton>
            <IconButton $w={27} aria-label="更多"><Dots /></IconButton>
          </PopupAddress>
          <IconButton $w={52} aria-label="菜单"><Line s={12} vb={12} w={2}><path d="M0 1.500h12M0 6h12M0 10.500h12" /></Line></IconButton>
        </PopupBar>
        <PopupBody>
          <FileLine>
            <Browse type="button" onClick={() => file.current.click()}>浏览...</Browse>
            <input ref={file} type="file" hidden aria-label="选择文件" />
            未选择文件。
          </FileLine>
          <Upload type="button">
            <svg width="15" height="15" viewBox="0 0 15 15"><path d="M0 0h11l4 4v11H0z" fill="#fff" /><path d="M3 2h6v4H3zM3 9h9v4H3z" fill="#3bb4f2" /></svg>
            上传图片
          </Upload>
        </PopupBody>
      </Popup>

      <Watermark><strong>激活 Windows</strong>转到“设置”以激活 Windows。</Watermark>
      <Cursor width="13" height="20" viewBox="0 0 13 20"><path d="M1 1v15l3.500-3 2.500 6 2.500-1L7 12h5z" fill="#fff" stroke="#333" /></Cursor>
    </Screen>
  );
}
